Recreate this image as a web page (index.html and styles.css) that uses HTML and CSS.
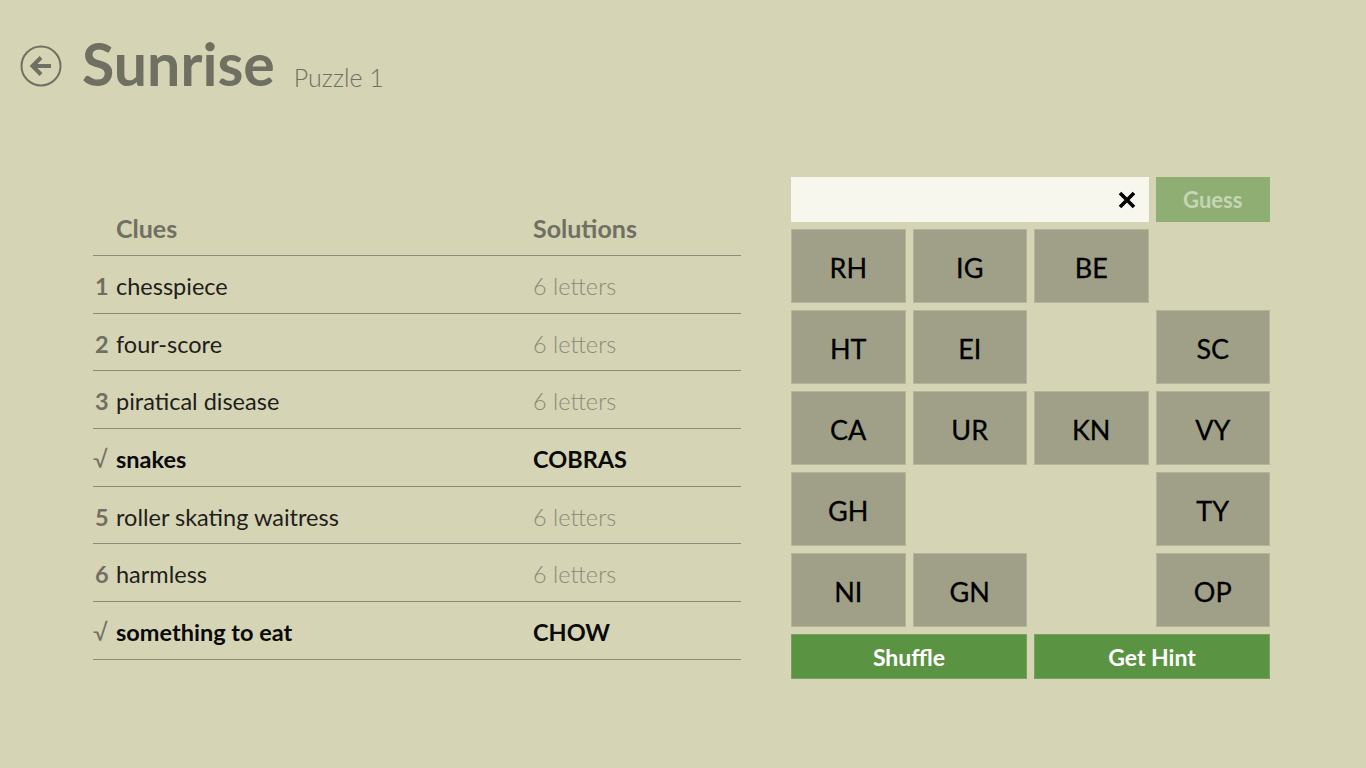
FILE: index.html
```html
<!DOCTYPE html>
<html lang="en">
<head>
<meta charset="utf-8">
<title>Sunrise - Puzzle 1</title>
<link rel="stylesheet" href="styles.css">
</head>
<body>
<header class="page-header">
  <button class="back-btn" aria-label="Back">
    <svg width="42" height="42" viewBox="0 0 42 42">
      <circle cx="21" cy="21" r="19.5" fill="none" stroke="#707062" stroke-width="2"/>
      <path d="M31 21 H14" stroke="#707062" stroke-width="4" fill="none"/>
      <path d="M21 12.5 L12.5 21 L21 29.5" stroke="#707062" stroke-width="4" fill="none"/>
    </svg>
  </button>
  <h1 class="title">Sunrise</h1>
  <span class="subtitle">Puzzle 1</span>
</header>

<main class="main">
  <section class="clues">
    <div class="clue-head">
      <span class="num"></span>
      <span class="clue-col">Clues</span>
      <span class="sol-col">Solutions</span>
    </div>
    <div class="clue-row">
      <span class="num">1</span>
      <span class="clue-col">chesspiece</span>
      <span class="sol-col hint">6 letters</span>
    </div>
    <div class="clue-row">
      <span class="num">2</span>
      <span class="clue-col">four-score</span>
      <span class="sol-col hint">6 letters</span>
    </div>
    <div class="clue-row">
      <span class="num">3</span>
      <span class="clue-col">piratical disease</span>
      <span class="sol-col hint">6 letters</span>
    </div>
    <div class="clue-row solved">
      <span class="num check">&#x221A;</span>
      <span class="clue-col">snakes</span>
      <span class="sol-col">COBRAS</span>
    </div>
    <div class="clue-row">
      <span class="num">5</span>
      <span class="clue-col">roller skating waitress</span>
      <span class="sol-col hint">6 letters</span>
    </div>
    <div class="clue-row">
      <span class="num">6</span>
      <span class="clue-col">harmless</span>
      <span class="sol-col hint">6 letters</span>
    </div>
    <div class="clue-row solved">
      <span class="num check">&#x221A;</span>
      <span class="clue-col">something to eat</span>
      <span class="sol-col">CHOW</span>
    </div>
  </section>

  <section class="board">
    <div class="entry">
      <svg class="clear" width="18" height="18" viewBox="0 0 18 18" aria-label="Clear">
        <path d="M2 2 L16 16 M16 2 L2 16" stroke="#000" stroke-width="3.6" fill="none"/>
      </svg>
    </div>
    <button class="guess">Guess</button>

    <div class="tile r2 c1">RH</div>
    <div class="tile r2 c2">IG</div>
    <div class="tile r2 c3">BE</div>

    <div class="tile r3 c1">HT</div>
    <div class="tile r3 c2">EI</div>
    <div class="tile r3 c4">SC</div>

    <div class="tile r4 c1">CA</div>
    <div class="tile r4 c2">UR</div>
    <div class="tile r4 c3">KN</div>
    <div class="tile r4 c4">VY</div>

    <div class="tile r5 c1">GH</div>
    <div class="tile r5 c4">TY</div>

    <div class="tile r6 c1">NI</div>
    <div class="tile r6 c2">GN</div>
    <div class="tile r6 c4">OP</div>

    <button class="action shuffle">Shuffle</button>
    <button class="action hint-btn">Get Hint</button>
  </section>
</main>
</body>
</html>
```

FILE: styles.css
```css
* { box-sizing: border-box; }

html, body {
  margin: 0;
  padding: 0;
}

body {
  width: 1366px;
  height: 768px;
  overflow: hidden;
  background: #d5d4b5;
  font-family: Lato, "Liberation Sans", sans-serif;
  color: #111;
}

.page-header {
  display: flex;
  align-items: flex-start;
  padding: 34px 0 0 20px;
  height: 100px;
}

.back-btn {
  width: 42px;
  height: 42px;
  padding: 0;
  margin: 11px 0 0 0;
  border: 0;
  background: transparent;
  display: block;
}
.back-btn svg { display: block; }

.title {
  margin: 0 0 0 20px;
  font-size: 59px;
  line-height: 59px;
  font-weight: 700;
  color: #707062;
}

.subtitle {
  margin: 28px 0 0 19px;
  font-size: 25px;
  line-height: 30px;
  font-weight: 300;
  color: #707062;
}

.main {
  display: flex;
  align-items: flex-start;
  padding: 77px 0 0 93px;
  gap: 50px;
}

.clues {
  width: 648px;
}

.clue-head,
.clue-row {
  display: flex;
  border-bottom: 1px solid #8c8b79;
  font-size: 23.5px;
}

.clue-head {
  height: 79px;
  align-items: flex-end;
  padding-bottom: 12px;
  font-size: 25px;
  font-weight: 700;
  color: #707062;
}

.clue-row {
  height: 57.7px;
  align-items: center;
  padding-top: 3px;
  font-weight: 400;
  color: #1e1e1a;
}

.num {
  width: 23px;
  flex: none;
  padding-left: 2px;
  font-weight: 700;
  color: #707062;
}

.check {
  padding-left: 0;
  font-weight: 400;
  color: #707062;
}

.clue-col {
  width: 417px;
  flex: none;
}

.sol-col {
  flex: 1;
}

.hint {
  color: #8b8a77;
  font-weight: 300;
}

.solved .clue-col,
.solved .sol-col {
  font-weight: 700;
  color: #0a0a0a;
}

.board {
  width: 479px;
  display: grid;
  grid-template-columns: repeat(4, 1fr);
  grid-template-rows: 45px repeat(5, 74px) 45px;
  gap: 7px;
}

.entry {
  grid-column: 1 / 4;
  grid-row: 1;
  background: #f7f7ee;
  display: flex;
  align-items: center;
  justify-content: flex-end;
  padding-right: 13px;
}

.clear {
  display: block;
}

button {
  font-family: inherit;
  cursor: pointer;
}

.guess {
  grid-column: 4;
  grid-row: 1;
  border: 0;
  background: #8fae74;
  color: #c6d6b2;
  font-size: 22px;
  font-weight: 700;
}

.tile {
  background: #a0a088;
  border: 1px solid #b4b39b;
  display: flex;
  align-items: center;
  justify-content: center;
  font-size: 27px;
  font-weight: 400;
  color: #000;
  padding-top: 2px;
  -webkit-text-stroke: 0.3px #000;
}

.r2 { grid-row: 2; }
.r3 { grid-row: 3; }
.r4 { grid-row: 4; }
.r5 { grid-row: 5; }
.r6 { grid-row: 6; }
.c1 { grid-column: 1; }
.c2 { grid-column: 2; }
.c3 { grid-column: 3; }
.c4 { grid-column: 4; }

.action {
  grid-row: 7;
  border: 1px solid #77a262;
  background: #5a9342;
  color: #fff;
  font-size: 23px;
  font-weight: 700;
}

.shuffle { grid-column: 1 / 3; }
.hint-btn { grid-column: 3 / 5; }
```
